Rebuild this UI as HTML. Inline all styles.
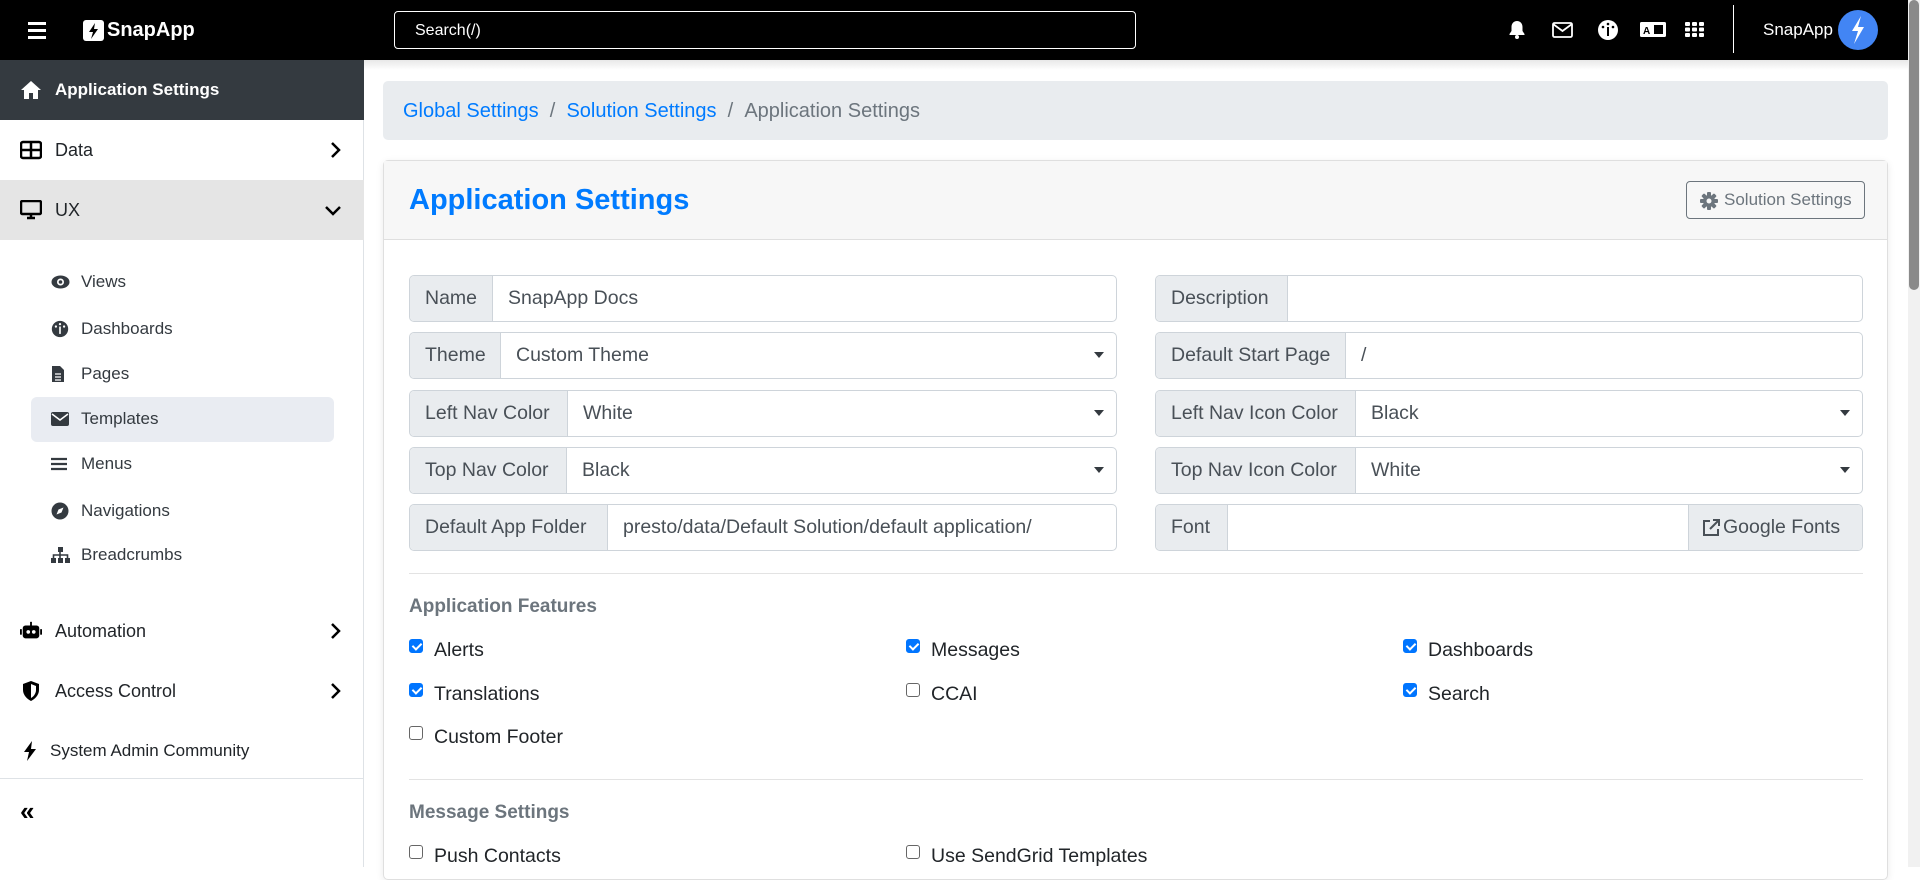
<!DOCTYPE html>
<html><head><meta charset="utf-8"><style>
*{box-sizing:border-box;margin:0;padding:0}
body{width:1920px;height:867px;overflow:hidden;background:#fff;font-family:"Liberation Sans",sans-serif;color:#212529;position:relative}
.a{position:absolute}
.top{left:0;top:0;width:1908px;height:60px;background:#000}
.side{left:0;top:60px;width:364px;height:807px;background:#fff;border-right:1px solid #dee2e6}
.main{left:364px;top:60px;width:1544px;height:807px;background:#fff}
.sb{left:1908px;top:0;width:12px;height:867px;background:#f1f1f1}
.sbt{left:1909px;top:0;width:10px;height:290px;background:#8a8a8a;border-radius:5px}
.nav{position:absolute;left:0;width:364px;height:60px;display:flex;align-items:center;font-size:18px;color:#212529}
.nav .ic{position:absolute;left:20px;top:20px;width:22px;height:20px}
.nav span.t{position:absolute;left:55px}
.nav .ch{position:absolute;right:22px}
.sub{position:absolute;left:0;font-size:17px;color:#343a40;height:44px;width:364px;display:flex;align-items:center}
.sub span{position:absolute;left:81px}
.sub svg{position:absolute;left:51px}
.ig{position:absolute;height:47px;display:flex;border:1px solid #ced4da;border-radius:5px;font-size:19.5px;color:#495057;background:#fff;overflow:hidden}
.ig .l{background:#e9ecef;border-right:1px solid #ced4da;display:flex;align-items:center;padding-left:15px;height:100%;flex:none}
.ig .v{display:flex;align-items:center;padding-left:15px;flex:1;position:relative}
.ig .car{position:absolute;right:12px;top:19px;width:0;height:0;border-left:5px solid transparent;border-right:5px solid transparent;border-top:6px solid #343a40}
.cb{position:absolute;font-size:19.5px;color:#212529;height:24px;display:flex;align-items:center}
.cb i{display:inline-block;width:14px;height:14px;border:1px solid #666;border-radius:3px;margin-right:11px;position:relative;top:-4px;background:#fff}
.cb i.on{background:#0075ff;border-color:#0075ff}
.cb i.on:after{content:"";position:absolute;left:4px;top:1px;width:4px;height:7px;border:solid #fff;border-width:0 2px 2px 0;transform:rotate(45deg)}
h5{position:absolute;font-size:19px;font-weight:bold;color:#6c757d}
</style></head><body>
<div class="a top"></div>
<div class="a" style="left:28px;top:22px;width:18px;height:3px;background:#fff"></div>
<div class="a" style="left:28px;top:29px;width:18px;height:3px;background:#fff"></div>
<div class="a" style="left:28px;top:36px;width:18px;height:3px;background:#fff"></div>
<div class="a" style="left:83px;top:20px;width:21px;height:21px;background:#fff;border-radius:3px"></div>
<svg class="a" style="left:86px;top:22px" width="15" height="18" viewBox="0 0 15 18"><path d="M9 1 L3 10 H7 L5 17 L12 7 H8 Z" fill="#000"/></svg>
<div class="a" style="left:107px;top:19px;font-size:20px;font-weight:bold;color:#fff">SnapApp</div>
<div class="a" style="left:394px;top:11px;width:742px;height:38px;border:1px solid #fff;border-radius:4px;color:#fff;font-size:16px;padding:10px 0 0 20px">Search(/)</div>
<svg class="a" style="left:1507px;top:20px" width="20" height="20" viewBox="0 0 20 20"><path d="M10 1c-3.3 0-5.5 2.5-5.5 6v4L2.5 14v1h15v-1l-2-3V7c0-3.5-2.2-6-5.5-6z" fill="#fff"/><circle cx="10" cy="17" r="2" fill="#fff"/></svg>
<svg class="a" style="left:1552px;top:22px" width="21" height="16" viewBox="0 0 21 16"><rect x="1" y="1" width="19" height="14" rx="1.5" fill="none" stroke="#fff" stroke-width="1.8"/><path d="M1 2 L10.5 9 L20 2" fill="none" stroke="#fff" stroke-width="1.8"/></svg>
<svg class="a" style="left:1597px;top:19px" width="22" height="22" viewBox="0 0 22 22"><circle cx="11" cy="11" r="10" fill="#fff"/><circle cx="11" cy="5" r="1.3"/><circle cx="6" cy="8" r="1.3"/><circle cx="16" cy="8" r="1.3"/><rect x="10" y="8" width="2" height="9"/></svg>
<svg class="a" style="left:1640px;top:21px" width="26" height="18" viewBox="0 0 26 18"><rect x="0" y="1" width="26" height="15" rx="1.5" fill="#fff"/><text x="3" y="13" font-size="10" font-weight="bold" font-family="Liberation Sans">A</text><rect x="14" y="4" width="9" height="9" fill="#000"/></svg>
<svg class="a" style="left:1685px;top:22px" width="19" height="15" viewBox="0 0 19 15"><g fill="#fff"><rect x="0" y="0" width="5" height="4" rx="1"/><rect x="7" y="0" width="5" height="4" rx="1"/><rect x="14" y="0" width="5" height="4" rx="1"/><rect x="0" y="5.5" width="5" height="4" rx="1"/><rect x="7" y="5.5" width="5" height="4" rx="1"/><rect x="14" y="5.5" width="5" height="4" rx="1"/><rect x="0" y="11" width="5" height="4" rx="1"/><rect x="7" y="11" width="5" height="4" rx="1"/><rect x="14" y="11" width="5" height="4" rx="1"/></g></svg>
<div class="a" style="left:1733px;top:5px;width:1px;height:48px;background:#fff"></div>
<div class="a" style="left:1763px;top:20px;font-size:17px;color:#fff">SnapApp</div>
<div class="a" style="left:1838px;top:10px;width:40px;height:40px;border-radius:50%;background:#4285f4"></div>
<svg class="a" style="left:1848px;top:14px" width="20" height="32" viewBox="0 0 20 32"><path d="M13 2 L4 17 H10 L6 30 L16 13 H10 Z" fill="#fff"/></svg>

<div class="a side">
 <div class="nav" style="top:0;background:#343a40;color:#fff;font-weight:bold;font-size:17px">
  <svg class="ic" viewBox="0 0 22 20"><path d="M11 1 L1 10 H4 V19 H9 V13 H13 V19 H18 V10 H21 Z" fill="#fff"/></svg><span class="t">Application Settings</span></div>
 <div class="nav" style="top:60px">
  <svg class="ic" viewBox="0 0 22 20"><rect x="1" y="2" width="20" height="16" rx="2" fill="none" stroke="#000" stroke-width="2.5"/><path d="M1 10 H21 M11 2 V18" stroke="#000" stroke-width="2.5"/></svg><span class="t">Data</span>
  <svg class="ch" width="12" height="18" viewBox="0 0 12 18"><path d="M2 2 L9 9 L2 16" fill="none" stroke="#000" stroke-width="2.5"/></svg></div>
 <div class="nav" style="top:120px;background:#e5e5e5">
  <svg class="ic" viewBox="0 0 22 20"><rect x="1" y="1" width="20" height="13" rx="1.5" fill="none" stroke="#000" stroke-width="2.5"/><path d="M7 18 H15 M11 14 V18" stroke="#000" stroke-width="2.5"/></svg><span class="t">UX</span>
  <svg class="ch" width="18" height="12" viewBox="0 0 18 12"><path d="M2 3 L9 10 L16 3" fill="none" stroke="#000" stroke-width="2.5"/></svg></div>
 <div class="a" style="left:31px;top:337px;width:303px;height:45px;background:#e9ecf2;border-radius:6px"></div>
 <div class="sub" style="top:200px"><svg width="19" height="14" viewBox="0 0 19 14"><ellipse cx="9.5" cy="7" rx="9" ry="6.5" fill="#343a40"/><circle cx="9.5" cy="7" r="3.5" fill="#fff"/><circle cx="9.5" cy="7" r="1.8" fill="#343a40"/></svg><span>Views</span></div>
 <div class="sub" style="top:247px"><svg width="18" height="18" viewBox="0 0 22 22"><circle cx="11" cy="11" r="10" fill="#343a40"/><circle cx="11" cy="5" r="1.4" fill="#fff"/><circle cx="6" cy="8" r="1.4" fill="#fff"/><circle cx="16" cy="8" r="1.4" fill="#fff"/><rect x="10" y="8" width="2" height="9" fill="#fff"/></svg><span>Dashboards</span></div>
 <div class="sub" style="top:292px"><svg width="14" height="18" viewBox="0 0 14 18"><path d="M1 1 H9 L13 5 V17 H1 Z" fill="#343a40"/><path d="M4 9 H10 M4 12 H10 M4 15 H10" stroke="#fff" stroke-width="1.3"/></svg><span>Pages</span></div>
 <div class="sub" style="top:337px"><svg width="18" height="14" viewBox="0 0 18 14"><rect x="0" y="0" width="18" height="14" rx="2" fill="#343a40"/><path d="M1 2 L9 8 L17 2" fill="none" stroke="#fff" stroke-width="1.5"/></svg><span>Templates</span></div>
 <div class="sub" style="top:382px"><svg width="16" height="14" viewBox="0 0 16 14"><path d="M0 2 H16 M0 7 H16 M0 12 H16" stroke="#343a40" stroke-width="2.2"/></svg><span>Menus</span></div>
 <div class="sub" style="top:429px"><svg width="18" height="18" viewBox="0 0 18 18"><circle cx="9" cy="9" r="8.5" fill="#343a40"/><path d="M12.5 5.5 L10.5 10.5 L5.5 12.5 L7.5 7.5 Z" fill="#fff"/></svg><span>Navigations</span></div>
 <div class="sub" style="top:473px"><svg width="19" height="17" viewBox="0 0 19 17"><g fill="#343a40"><rect x="7" y="0" width="5" height="5"/><rect x="0" y="11" width="5" height="5"/><rect x="7" y="11" width="5" height="5"/><rect x="14" y="11" width="5" height="5"/><path d="M9 5 V11 M2.5 11 V8 H16.5 V11" stroke="#343a40" stroke-width="1.6" fill="none"/></g></svg><span>Breadcrumbs</span></div>
 <div class="nav" style="top:541px">
  <svg class="ic" viewBox="0 0 24 20"><rect x="3" y="4" width="18" height="14" rx="3" fill="#000"/><circle cx="9" cy="11" r="2" fill="#fff"/><circle cx="15" cy="11" r="2" fill="#fff"/><rect x="0" y="8" width="2" height="6" fill="#000"/><rect x="22" y="8" width="2" height="6" fill="#000"/><rect x="11" y="0" width="2" height="4" fill="#000"/></svg><span class="t">Automation</span>
  <svg class="ch" width="12" height="18" viewBox="0 0 12 18"><path d="M2 2 L9 9 L2 16" fill="none" stroke="#000" stroke-width="2.5"/></svg></div>
 <div class="nav" style="top:601px">
  <svg class="ic" viewBox="0 0 22 20"><path d="M11 0 L19 3 V9 C19 14 15 18 11 20 C7 18 3 14 3 9 V3 Z" fill="#000"/><path d="M11 3 L16 5 V9 C16 13 13 16 11 17 Z" fill="#fff"/></svg><span class="t">Access Control</span>
  <svg class="ch" width="12" height="18" viewBox="0 0 12 18"><path d="M2 2 L9 9 L2 16" fill="none" stroke="#000" stroke-width="2.5"/></svg></div>
 <div class="nav" style="top:661px;font-size:17px">
  <svg class="ic" style="left:22px;width:16px" viewBox="0 0 16 20"><path d="M10 0 L2 11 H7 L5 20 L14 8 H9 Z" fill="#000"/></svg><span class="t" style="left:50px">System Admin Community</span></div>
 <div class="a" style="left:0;top:718px;width:364px;height:1px;background:#dee2e6"></div>
 <div class="a" style="left:20px;top:736px;font-size:26px;font-weight:bold;color:#000">«</div>
</div>

<div class="a main">
 <div class="a" style="left:0;top:0;width:1544px;height:10px;background:linear-gradient(#e8e8e8,#fff)"></div>
 <div class="a" style="left:19px;top:21px;width:1505px;height:59px;background:#e9ecef;border-radius:5px;font-size:20px;padding:19px 0 0 20px;color:#6c757d">
  <span style="color:#007bff">Global Settings</span>&nbsp; / &nbsp;<span style="color:#007bff">Solution Settings</span>&nbsp; / &nbsp;Application Settings</div>
 <div class="a" style="left:19px;top:100px;width:1505px;height:720px;border:1px solid #dfdfdf;border-radius:5px;box-shadow:0 2px 8px rgba(0,0,0,.08)">
  <div class="a" style="left:0;top:0;width:1503px;height:79px;background:#f7f7f7;border-bottom:1px solid #dfdfdf"></div>
  <div class="a" style="left:25px;top:23px;font-size:29px;font-weight:bold;color:#007bff">Application Settings</div>
  <div class="a" style="left:1302px;top:20px;width:179px;height:38px;border:1px solid #6c757d;border-radius:4px;color:#6c757d;font-size:17px;padding:8px 0 0 37px">Solution Settings</div>
  <svg class="a" style="left:1316px;top:31px" width="18" height="18" viewBox="0 0 18 18"><g fill="#6c757d"><circle cx="9" cy="9" r="6"/><rect x="7" y="0" width="4" height="18" rx="1"/><rect x="0" y="7" width="18" height="4" rx="1"/><rect x="7" y="0" width="4" height="18" rx="1" transform="rotate(45 9 9)"/><rect x="7" y="0" width="4" height="18" rx="1" transform="rotate(-45 9 9)"/></g><circle cx="9" cy="9" r="2.5" fill="#f7f7f7"/></svg>
 </div>
</div>

<div class="ig" style="left:409px;top:275px;width:708px"><div class="l" style="width:83px">Name</div><div class="v">SnapApp Docs</div></div>
<div class="ig" style="left:409px;top:332px;width:708px"><div class="l" style="width:91px">Theme</div><div class="v">Custom Theme<b class="car"></b></div></div>
<div class="ig" style="left:409px;top:390px;width:708px"><div class="l" style="width:158px">Left Nav Color</div><div class="v">White<b class="car"></b></div></div>
<div class="ig" style="left:409px;top:447px;width:708px"><div class="l" style="width:157px">Top Nav Color</div><div class="v">Black<b class="car"></b></div></div>
<div class="ig" style="left:409px;top:504px;width:708px"><div class="l" style="width:198px">Default App Folder</div><div class="v">presto/data/Default Solution/default application/</div></div>

<div class="ig" style="left:1155px;top:275px;width:708px"><div class="l" style="width:132px">Description</div><div class="v"></div></div>
<div class="ig" style="left:1155px;top:332px;width:708px"><div class="l" style="width:190px">Default Start Page</div><div class="v">/</div></div>
<div class="ig" style="left:1155px;top:390px;width:708px"><div class="l" style="width:200px">Left Nav Icon Color</div><div class="v">Black<b class="car"></b></div></div>
<div class="ig" style="left:1155px;top:447px;width:708px"><div class="l" style="width:200px">Top Nav Icon Color</div><div class="v">White<b class="car"></b></div></div>
<div class="ig" style="left:1155px;top:504px;width:708px"><div class="l" style="width:72px">Font</div><div class="v"></div><div class="l" style="width:174px;border-right:0;border-left:1px solid #ced4da;padding-left:12px"><svg width="20" height="20" viewBox="0 0 20 20" style="margin-right:2px"><path d="M9 3 H3 V17 H17 V11" fill="none" stroke="#495057" stroke-width="2"/><path d="M12 2 H18 V8 M18 2 L9 11" fill="none" stroke="#495057" stroke-width="2"/></svg>Google Fonts</div></div>

<div class="a" style="left:409px;top:573px;width:1454px;height:1px;background:#e3e3e3"></div>
<h5 style="left:409px;top:596px">Application Features</h5>
<div class="cb" style="left:409px;top:638px"><i class="on"></i>Alerts</div>
<div class="cb" style="left:906px;top:638px"><i class="on"></i>Messages</div>
<div class="cb" style="left:1403px;top:638px"><i class="on"></i>Dashboards</div>
<div class="cb" style="left:409px;top:682px"><i class="on"></i>Translations</div>
<div class="cb" style="left:906px;top:682px"><i></i>CCAI</div>
<div class="cb" style="left:1403px;top:682px"><i class="on"></i>Search</div>
<div class="cb" style="left:409px;top:725px"><i></i>Custom Footer</div>
<div class="a" style="left:409px;top:779px;width:1454px;height:1px;background:#e3e3e3"></div>
<h5 style="left:409px;top:802px">Message Settings</h5>
<div class="cb" style="left:409px;top:844px"><i></i>Push Contacts</div>
<div class="cb" style="left:906px;top:844px"><i></i>Use SendGrid Templates</div>

<div class="a sb"></div><div class="a sbt"></div>
</body></html>
